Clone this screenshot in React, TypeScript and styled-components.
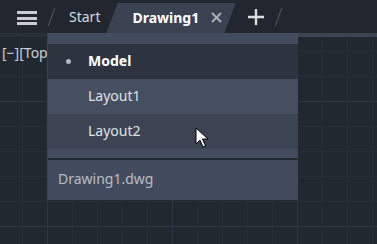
import styled, { createGlobalStyle } from "styled-components";

const layouts = ["Model", "Layout1", "Layout2"];

function App() {
  return (
    <Screen>
      <GlobalStyle />
      <TopBar>
        <Hamburger>
          <span />
          <span />
          <span />
        </Hamburger>
        <Slash />
        <TabLabel>Start</TabLabel>
        <ActiveTab>
          <ActiveTitle>Drawing1</ActiveTitle>
          <Close width="11" height="11" viewBox="0 0 11 11">
            <path d="M1 1l9 9M10 1l-9 9" stroke="#a9aeb6" strokeWidth="2" />
          </Close>
        </ActiveTab>
        <Plus>
          <svg width="18" height="18" viewBox="0 0 18 18">
            <path d="M9 1v16M1 9h16" stroke="#d9dce1" strokeWidth="2.4" />
          </svg>
        </Plus>
        <Slash />
      </TopBar>
      <Strip>
        <StripLeft />
        <StripRight />
      </Strip>
      <Canvas>
        <ViewLabel>[−][Top]</ViewLabel>
      </Canvas>
      <Menu>
        <MenuList>
          {layouts.map((name, i) => (
            <MenuItem key={name} $state={i === 0 ? "current" : i === 1 ? "hover" : "idle"}>
              {i === 0 && <Bullet />}
              {name}
            </MenuItem>
          ))}
        </MenuList>
        <Divider />
        <FileName>Drawing1.dwg</FileName>
      </Menu>
      <Cursor width="14" height="21" viewBox="0 0 14 21">
        <path
          d="M1 1v16l4-4 3 7 2.5-1-3-7h5.5z"
          fill="#ffffff"
          stroke="#000000"
          strokeWidth="1"
          strokeLinejoin="miter"
        />
      </Cursor>
    </Screen>
  );
}

export default App;

const GlobalStyle = createGlobalStyle`
  * {
    margin: 0;
    padding: 0;
    box-sizing: border-box;
  }

  body {
    background: #212830;
    font-family: "Noto Sans", "Open Sans", sans-serif;
    overflow: hidden;
  }
`;

const Screen = styled.div`
  position: relative;
  width: 377px;
  height: 244px;
  display: flex;
  flex-direction: column;
  overflow: hidden;
`;

const TopBar = styled.div`
  height: 33px;
  background: #22272f;
  display: flex;
  align-items: center;
  padding-left: 17px;
`;

const Hamburger = styled.div`
  width: 20px;
  display: flex;
  flex-direction: column;
  gap: 2.7px;
  margin-top: 3px;
  margin-right: 14px;

  span {
    height: 3px;
    background: #c9cdd3;
  }
`;

const Slash = styled.div`
  width: 1px;
  height: 18px;
  background: #535a66;
  transform: skewX(-20deg);
`;

const TabLabel = styled.div`
  font-size: 14px;
  color: #d7dbe0;
  margin-left: 17px;
  margin-right: 12px;
`;

const ActiveTab = styled.div`
  position: relative;
  height: 30px;
  margin-top: 3px;
  width: 118px;
  display: flex;
  align-items: center;
  padding-left: 20px;
  gap: 12px;

  &::before {
    content: "";
    position: absolute;
    inset: 0;
    background: #3b4252;
    transform: skewX(-21deg);
    z-index: 0;
  }
`;

const ActiveTitle = styled.span`
  position: relative;
  font-weight: 700;
  font-size: 14px;
  color: #ffffff;
  margin-top: -2px;
`;

const Close = styled.svg`
  position: relative;
  margin-top: -1px;
`;

const Plus = styled.div`
  display: flex;
  margin-left: 17px;
  margin-right: 13px;
`;

const Strip = styled.div`
  height: 4px;
  display: flex;
`;

const StripLeft = styled.div`
  width: 48px;
  background: #2a2f38;
`;

const StripRight = styled.div`
  flex: 1;
  background: #3c4454;
`;

const Canvas = styled.div`
  flex: 1;
  background-color: #212830;
  background-image: linear-gradient(to right, #2f3643 1px, transparent 1px),
    linear-gradient(to bottom, #2f3643 1px, transparent 1px),
    linear-gradient(to right, #282e38 1px, transparent 1px),
    linear-gradient(to bottom, #282e38 1px, transparent 1px);
  background-size: 125px 125px, 125px 125px, 25px 25px, 25px 25px;
  background-position: 47px 0, 0 64px, 22px 0, 0 14px;
  padding: 6px 0 0 2px;
`;

const ViewLabel = styled.div`
  font-size: 14px;
  color: #cbcfd5;
  white-space: nowrap;
`;

const Menu = styled.div`
  position: absolute;
  left: 48px;
  top: 33px;
  width: 250px;
  background: #434c5e;
  box-shadow: -1px 0 0 #3a4252;
`;

const MenuList = styled.div`
  padding: 11px 0 9px;
`;

const MenuItem = styled.div<{ $state: "current" | "hover" | "idle" }>`
  position: relative;
  height: 35px;
  display: flex;
  align-items: center;
  padding: 0 0 3px 40px;
  font-size: 14px;
  font-weight: ${(p) => (p.$state === "current" ? 700 : 400)};
  color: ${(p) => (p.$state === "current" ? "#ffffff" : "#dfe2e6")};
  background: ${(p) =>
    p.$state === "current" ? "#2e343f" : p.$state === "hover" ? "#464f60" : "#3c4454"};
`;

const Bullet = styled.span`
  position: absolute;
  left: 18px;
  top: 15px;
  width: 5px;
  height: 5px;
  border-radius: 50%;
  background: #b3b8c0;
`;

const Divider = styled.div`
  height: 2px;
  background: #242932;
`;

const FileName = styled.div`
  height: 40px;
  display: flex;
  align-items: center;
  padding: 0 0 4px 10px;
  font-size: 14px;
  color: #b7bcc4;
`;

const Cursor = styled.svg`
  position: absolute;
  left: 195px;
  top: 127px;
`;
